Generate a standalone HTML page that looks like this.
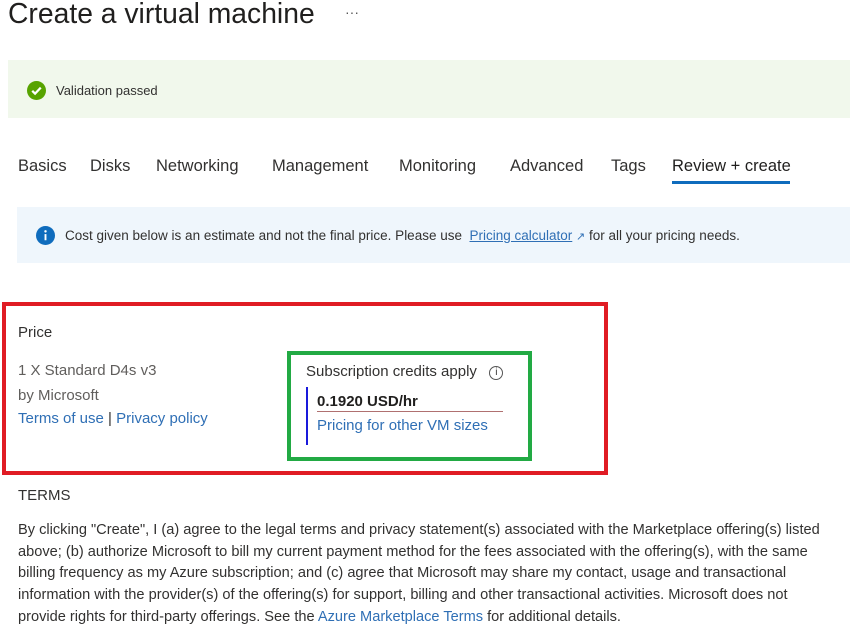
<!DOCTYPE html>
<html><head><style>
body{margin:0;width:850px;height:621px;overflow:hidden;background:#fff;font-family:"Liberation Sans",sans-serif;color:#323130;position:relative}
.a{position:absolute;white-space:nowrap}
a{color:#2f6fb5;text-decoration:none}
</style></head><body>
<div class="a" style="left:8px;top:-3px;font-size:28.3px;color:#201f1e">Create a virtual machine</div>
<div class="a" style="left:345px;top:4px;font-size:14px;color:#555">···</div>
<div class="a" style="left:8px;top:60px;width:842px;height:58px;background:#f1f8ec"></div>
<svg class="a" style="left:27px;top:81px" width="19" height="19" viewBox="0 0 20 20"><circle cx="10" cy="10" r="10" fill="#57a300"/><path d="M5.5 10.3l3 3 6-6.3" stroke="#fff" stroke-width="2.4" fill="none"/></svg>
<div class="a" style="left:56px;top:83px;font-size:13px">Validation passed</div>
<div class="a" style="left:18px;top:157px;font-size:16.5px;color:#323130">
<span style="position:absolute;left:0">Basics</span><span style="position:absolute;left:72px">Disks</span><span style="position:absolute;left:138px">Networking</span><span style="position:absolute;left:254px">Management</span><span style="position:absolute;left:381px">Monitoring</span><span style="position:absolute;left:492px">Advanced</span><span style="position:absolute;left:593px">Tags</span><span style="position:absolute;left:654px;color:#201f1e">Review + create</span></div>
<div class="a" style="left:672px;top:181px;width:118px;height:3px;background:#0f6cbd"></div>
<div class="a" style="left:17px;top:207px;width:833px;height:56px;background:#eff6fc"></div>
<svg class="a" style="left:36px;top:226px" width="19" height="19" viewBox="0 0 20 20"><circle cx="10" cy="10" r="10" fill="#0f6cbd"/><rect x="9" y="8.5" width="2" height="6.5" fill="#fff"/><circle cx="10" cy="5.7" r="1.3" fill="#fff"/></svg>
<div class="a" style="left:65px;top:228px;font-size:13.5px">Cost given below is an estimate and not the final price. Please use &nbsp;<a style="text-decoration:underline">Pricing calculator</a> <span style="color:#2f6fb5;font-size:11px">↗</span> for all your pricing needs.</div>
<div class="a" style="left:2px;top:302px;width:598px;height:165px;border:4px solid #e01c24"></div>
<div class="a" style="left:18px;top:324px;font-size:15px">Price</div>
<div class="a" style="left:18px;top:362px;font-size:15px;color:#605e5c">1 X Standard D4s v3</div>
<div class="a" style="left:18px;top:387px;font-size:15px;color:#605e5c">by Microsoft</div>
<div class="a" style="left:18px;top:410px;font-size:15px"><a>Terms of use</a> | <a>Privacy policy</a></div>
<div class="a" style="left:287px;top:351px;width:237px;height:102px;border:4px solid #22aa44"></div>
<div class="a" style="left:306px;top:363px;font-size:15px">Subscription credits apply &nbsp; <span style="display:inline-block;width:12px;height:12px;border:1px solid #555;border-radius:50%;font-size:10px;line-height:12px;text-align:center;vertical-align:1px">i</span></div>
<div class="a" style="left:306px;top:387px;width:2px;height:58px;background:#1a1adb"></div>
<div class="a" style="left:317px;top:393px;font-size:15px;font-weight:bold;color:#201f1e">0.1920 USD/hr</div>
<div class="a" style="left:317px;top:411px;width:186px;height:1px;background:#b07070"></div>
<div class="a" style="left:317px;top:417px;font-size:15px"><a>Pricing for other VM sizes</a></div>
<div class="a" style="left:18px;top:487px;font-size:15px">TERMS</div>
<div class="a" style="left:18px;top:520px;font-size:14.6px;line-height:21.7px;white-space:normal;width:815px;color:#323130">By clicking "Create", I (a) agree to the legal terms and privacy statement(s) associated with the Marketplace offering(s) listed above; (b) authorize Microsoft to bill my current payment method for the fees associated with the offering(s), with the same billing frequency as my Azure subscription; and (c) agree that Microsoft may share my contact, usage and transactional information with the provider(s) of the offering(s) for support, billing and other transactional activities. Microsoft does not provide rights for third-party offerings. See the <a>Azure Marketplace Terms</a> for additional details.</div>
</body></html>
